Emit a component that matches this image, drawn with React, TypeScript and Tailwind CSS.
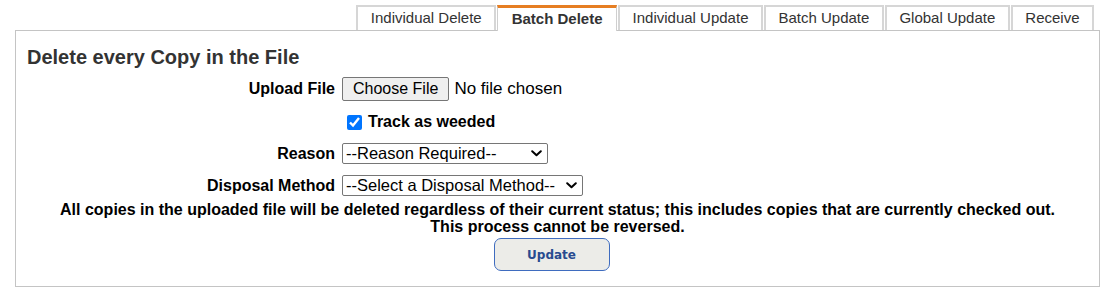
import React from "react"

const tabs = [
  { name: "Individual Delete" },
  { name: "Batch Delete", active: true },
  { name: "Individual Update" },
  { name: "Batch Update" },
  { name: "Global Update" },
  { name: "Receive" },
]

function Chevron() {
  return (
    <svg width="11" height="7" viewBox="0 0 11 7" className="shrink-0">
      <path d="M1.2 1.2 L5.5 5.3 L9.8 1.2" fill="none" stroke="#000" strokeWidth="2" strokeLinecap="round" strokeLinejoin="round" />
    </svg>
  )
}

function FakeSelect({ label, width }: { label: string; width: string }) {
  return (
    <div
      className={`flex h-[21px] items-center justify-between rounded-[2px] border border-[#767676] bg-white pl-[3px] pr-[5px] text-[16.5px] leading-none text-black ${width}`}
    >
      <span className="whitespace-nowrap">{label}</span>
      <Chevron />
    </div>
  )
}

export default function App() {
  return (
    <div className="h-[297px] w-[1119px] bg-white font-['Liberation_Sans',Arial,sans-serif]">
      {/* Tabs */}
      <div className="mt-[5px] flex h-[25px] items-end justify-end pr-[25px]">
        {tabs.map((tab) =>
          tab.active ? (
            <div
              key={tab.name}
              className="relative z-10 ml-px flex h-[26px] translate-y-px items-center border-x border-[#cfcfcf] border-t-[3px] border-t-[#e67e22] bg-white px-[13.5px] text-[15px] font-bold text-[#333]"
            >
              {tab.name}
            </div>
          ) : (
            <div
              key={tab.name}
              className="ml-px flex h-[25px] items-center border-x-2 border-t-2 border-[#d6d6d6] bg-white px-[12.5px] text-[15px] text-[#333]"
            >
              {tab.name}
            </div>
          )
        )}
      </div>

      {/* Panel */}
      <div className="ml-[15px] mr-[19px] border border-[#c4c4c4] pb-[15px] pt-[15px]">
        <h2 className="pl-[11px] text-[20px] font-bold leading-[22px] text-[#333]">Delete every Copy in the File</h2>

        <div className="mt-[9px] flex h-[24px] items-center">
          <div className="w-[319px] text-right text-[16px] font-bold text-black">Upload File</div>
          <div className="ml-[7px] flex items-center">
            <span className="flex h-[24px] items-center rounded-[2px] border border-[#767676] bg-[#efefef] px-[10px] text-[16px] text-black">
              Choose File
            </span>
            <span className="ml-[5px] text-[17px] text-black">No file chosen</span>
          </div>
        </div>

        <div className="mt-[11px] flex h-[20px] items-center">
          <div className="w-[319px]" />
          <label className="ml-[7px] flex items-center">
            <input type="checkbox" checked readOnly className="ml-[5px] h-[15px] w-[15px] accent-[#0075ff]" />
            <span className="ml-[6px] text-[16px] font-bold text-black">Track as weeded</span>
          </label>
        </div>

        <div className="mt-[11px] flex h-[21px] items-center">
          <div className="w-[319px] text-right text-[16px] font-bold text-black">Reason</div>
          <div className="ml-[7px]">
            <FakeSelect label="--Reason Required--" width="w-[206px]" />
          </div>
        </div>

        <div className="mt-[11px] flex h-[21px] items-center">
          <div className="w-[319px] text-right text-[16px] font-bold text-black">Disposal Method</div>
          <div className="ml-[7px]">
            <FakeSelect label="--Select a Disposal Method--" width="w-[241px]" />
          </div>
        </div>

        <p className="mt-[5px] text-center text-[16px] font-bold leading-[17px] text-black">
          All copies in the uploaded file will be deleted regardless of their current status; this includes copies that are currently checked out.
          <br />
          This process cannot be reversed.
        </p>

        <div className="mt-[3px] flex justify-center pr-[12px]">
          <button className="h-[33px] w-[116px] rounded-[7px] border-[1.5px] border-[#3f6cbf] bg-[#ecece8] font-['DejaVu_Sans',Verdana,sans-serif] text-[12px] font-bold text-[#284b8f]">
            Update
          </button>
        </div>
      </div>
    </div>
  )
}
